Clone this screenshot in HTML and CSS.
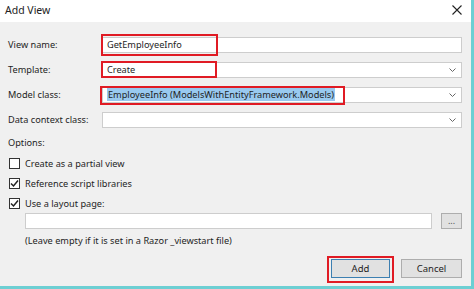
FILE: index.html
```html
<!DOCTYPE html>
<html lang="en">
<head>
    <meta charset="UTF-8">
    <title>Add View</title>
    <link rel="stylesheet" href="styles.css">
</head>
<body>
    <div class="window">
        <div class="titlebar">
            <span class="title">Add View</span>
            <svg class="close" width="10" height="10" viewBox="0 0 10 10">
                <path d="M0.5 0.5 L9.5 9.5 M9.5 0.5 L0.5 9.5" stroke="#222" stroke-width="1.1" fill="none"/>
            </svg>
        </div>

        <div class="content">
            <div class="fields">
                <label>View name:</label>
                <div class="field">
                    <div class="input">GetEmployeeInfo</div>
                    <span class="mark mark-name"></span>
                </div>

                <label>Template:</label>
                <div class="field">
                    <div class="input select">Create
                        <svg class="chev" width="7" height="4" viewBox="0 0 7 4"><path d="M0.5 0.5 L3.5 3.5 L6.5 0.5" stroke="#666" fill="none"/></svg>
                    </div>
                    <span class="mark mark-template"></span>
                </div>

                <label>Model class:</label>
                <div class="field">
                    <div class="input select"><span class="selected">EmployeeInfo (ModelsWithEntityFramework.Models)</span>
                        <svg class="chev" width="7" height="4" viewBox="0 0 7 4"><path d="M0.5 0.5 L3.5 3.5 L6.5 0.5" stroke="#666" fill="none"/></svg>
                    </div>
                    <span class="mark mark-model"></span>
                </div>

                <label>Data context class:</label>
                <div class="field">
                    <div class="input select">
                        <svg class="chev" width="7" height="4" viewBox="0 0 7 4"><path d="M0.5 0.5 L3.5 3.5 L6.5 0.5" stroke="#666" fill="none"/></svg>
                    </div>
                </div>
            </div>

            <div class="options">
                <div class="options-title">Options:</div>
                <div class="check-row">
                    <span class="checkbox"></span>
                    <span>Create as a partial view</span>
                </div>
                <div class="check-row">
                    <span class="checkbox checked">
                        <svg width="9" height="9" viewBox="0 0 9 9"><path d="M1 4.5 L3.5 7 L8 1.5" stroke="#222" stroke-width="1.5" fill="none"/></svg>
                    </span>
                    <span>Reference script libraries</span>
                </div>
                <div class="check-row">
                    <span class="checkbox checked">
                        <svg width="9" height="9" viewBox="0 0 9 9"><path d="M1 4.5 L3.5 7 L8 1.5" stroke="#222" stroke-width="1.5" fill="none"/></svg>
                    </span>
                    <span>Use a layout page:</span>
                </div>
                <div class="layout-row">
                    <div class="input layout-input"></div>
                    <button class="browse">...</button>
                </div>
                <div class="hint">(Leave empty if it is set in a Razor _viewstart file)</div>
            </div>

            <div class="actions">
                <div class="btn-wrap">
                    <button class="btn default">Add</button>
                    <span class="mark mark-add"></span>
                </div>
                <button class="btn">Cancel</button>
            </div>
        </div>
    </div>
</body>
</html>
```

FILE: styles.css
```css
* {
    box-sizing: border-box;
    margin: 0;
    padding: 0;
}

body {
    font-family: 'Noto Sans', 'Open Sans', sans-serif;
    font-size: 9.2px;
    color: #1e1e1e;
    background: #f0f0f0;
}

.window {
    width: 474px;
    height: 289px;
    background: #f0f0f0;
    border-right: 3px solid #6dcfd3;
    border-bottom: 3px solid #6dcfd3;
}

.titlebar {
    height: 22px;
    background: #fff;
    display: flex;
    align-items: center;
    justify-content: space-between;
    padding: 0 9px 2px 5px;
}

.title {
    font-size: 10.5px;
    color: #222;
}

.content {
    padding: 15px 9px 0 8px;
}

.fields {
    display: grid;
    grid-template-columns: 94px 1fr;
    row-gap: 9px;
    align-items: center;
}

label {
    line-height: 16px;
}

.field {
    position: relative;
}

.input {
    height: 16px;
    background: #fff;
    border: 1px solid #cdcdcd;
    padding: 0 4px;
    line-height: 14px;
    position: relative;
}

.select {
    padding-right: 18px;
}

.chev {
    position: absolute;
    right: 5px;
    top: 5px;
}

.selected {
    background: #99c9ef;
    padding: 0 1px;
}

.mark {
    position: absolute;
    border: 2px solid #e01b24;
    pointer-events: none;
}

.mark-name {
    left: -1px;
    top: -3px;
    width: 117px;
    height: 22px;
}

.mark-template {
    left: -1px;
    top: -1px;
    width: 116px;
    height: 17px;
}

.mark-model {
    left: -2px;
    top: -1px;
    width: 245px;
    height: 19px;
}

.options {
    padding-top: 7px;
}

.options-title {
    line-height: 16px;
    margin-bottom: 2px;
}

.check-row {
    display: flex;
    align-items: center;
    gap: 5px;
    height: 20px;
    padding-left: 1px;
}

.checkbox {
    width: 11px;
    height: 11px;
    border: 1px solid #333;
    background: #fff;
    display: flex;
    align-items: center;
    justify-content: center;
}

.layout-row {
    display: flex;
    gap: 9px;
    padding-left: 17px;
}

.layout-input {
    flex: 1;
}

.browse {
    width: 21px;
    height: 16px;
    background: #e1e1e1;
    border: 1px solid #adadad;
    font-family: inherit;
    font-size: 9px;
    line-height: 10px;
    color: #555;
}

.hint {
    padding-left: 17px;
    line-height: 16px;
    margin-top: 4px;
}

.actions {
    display: flex;
    justify-content: flex-end;
    gap: 11px;
    margin-top: 10px;
}

.btn-wrap {
    position: relative;
}

.btn {
    width: 61px;
    height: 19px;
    background: #e1e1e1;
    border: 1px solid #adadad;
    font-family: inherit;
    font-size: 9.5px;
    color: #1e1e1e;
}

.btn.default {
    width: 59px;
    border: 1px solid #3c7fb1;
}

.mark-add {
    left: -4px;
    top: -3px;
    width: 67px;
    height: 27px;
}
```
